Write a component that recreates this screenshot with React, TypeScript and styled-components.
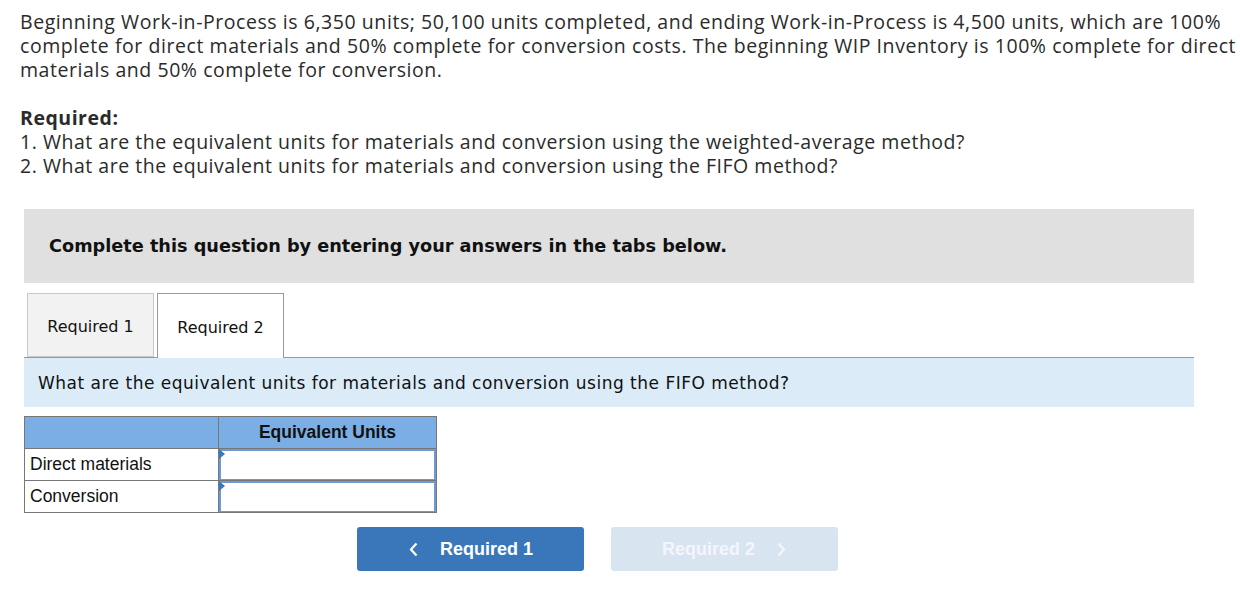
import React from 'react'
import styled, { createGlobalStyle } from 'styled-components'

const GlobalStyle = createGlobalStyle`
  body {
    margin: 0;
    background: white;
    color: #222;
  }
`

const Page = styled.div`
  padding: 10px 2px 0 20px;
  font-family: 'Open Sans', Lato, sans-serif;
`

const Intro = styled.p`
  margin: 0;
  font-size: 19.5px;
  line-height: 24px;
  letter-spacing: 0.56px;
  color: #2b2b2b;
`

const RequiredBlock = styled.div`
  margin-top: 24px;
  font-size: 19.5px;
  line-height: 24px;
  letter-spacing: 0.52px;
  color: #2b2b2b;

  strong {
    display: block;
    font-weight: 700;
  }
`

const Main = styled.div`
  margin: 31px 0 0 4px;
  width: 1170px;
`

const Instruction = styled.div`
  background: #e0e0e0;
  height: 74px;
  display: flex;
  align-items: center;
  padding-left: 25px;
  font-family: 'DejaVu Sans', Verdana, sans-serif;
  font-weight: 700;
  font-size: 17.7px;
  color: #111;
`

const Tabs = styled.div`
  display: flex;
  gap: 3px;
  margin-top: 10px;
  padding-left: 3px;
  border-bottom: 1px solid #999;
`

const Tab = styled.div<{ active?: boolean }>`
  width: 127px;
  height: ${(p) => (p.active ? '65px' : '64px')};
  margin-bottom: ${(p) => (p.active ? '-1px' : '0')};
  box-sizing: border-box;
  display: flex;
  align-items: center;
  justify-content: center;
  padding-top: 3px;
  font-family: 'DejaVu Sans', Verdana, sans-serif;
  font-size: 16px;
  color: #111;
  background: ${(p) => (p.active ? '#fff' : '#f2f2f2')};
  border: 1px solid ${(p) => (p.active ? '#999' : '#c8c8c8')};
  border-bottom: ${(p) => (p.active ? 'none' : '1px solid #c8c8c8')};
`

const Prompt = styled.div`
  background: #dbecf8;
  height: 49px;
  display: flex;
  align-items: center;
  padding-left: 14px;
  font-family: 'DejaVu Sans', Verdana, sans-serif;
  font-size: 17px;
  letter-spacing: 0.5px;
  color: #111;
`

const Table = styled.table`
  margin-top: 9px;
  border-collapse: collapse;
  font-family: 'Liberation Sans', Arial, sans-serif;
  font-size: 17.5px;
  color: #111;
`

const HeadCell = styled.th`
  background: #7aaee4;
  border: 1px solid #777;
  height: 31px;
  padding: 0;
  font-weight: 700;
  text-align: center;
`

const LabelCell = styled.td`
  width: 194px;
  height: 31px;
  border: 1px solid #777;
  padding: 0 0 0 5px;
  box-sizing: border-box;
`

const InputCell = styled.td`
  width: 217px;
  height: 31px;
  border: 1px solid #777;
  padding: 0;
  position: relative;
`

const Entry = styled.input`
  display: block;
  width: 100%;
  height: 31px;
  box-sizing: border-box;
  border: 2px solid #6b9ad6;
  border-width: 2px 2px 1px 2px;
  outline: none;
  background: white;
  margin: 0;
`

const Marker = styled.span`
  position: absolute;
  left: 0;
  top: 0;
  width: 0;
  height: 0;
  border-top: 5px solid transparent;
  border-bottom: 5px solid transparent;
  border-left: 6px solid #3a78bb;
`

const Nav = styled.div`
  display: flex;
  gap: 27px;
  margin: 14px 0 0 333px;
`

const NavButton = styled.button<{ disabled?: boolean }>`
  width: 227px;
  height: 44px;
  border: none;
  border-radius: 3px;
  background: ${(p) => (p.disabled ? '#d9e4f1' : '#3a77ba')};
  color: ${(p) => (p.disabled ? '#f3f6fb' : '#fff')};
  font-family: 'Liberation Sans', Arial, sans-serif;
  font-weight: 700;
  font-size: 18px;
  display: flex;
  align-items: center;
  justify-content: center;
  gap: 20px;
  padding: 0;

  svg {
    width: 12px;
    height: 15px;
  }
`

const Chevron = ({ dir }: { dir: 'left' | 'right' }) => (
  <svg viewBox="0 0 12 15" fill="none" stroke="currentColor" strokeWidth="2.2">
    {dir === 'left' ? <path d="M8.5 1.5 L3 7.5 L8.5 13.5" /> : <path d="M3.5 1.5 L9 7.5 L3.5 13.5" />}
  </svg>
)

const rows = ['Direct materials', 'Conversion']

export default function App() {
  return (
    <Page>
      <GlobalStyle />
      <Intro>
        Beginning Work-in-Process is 6,350 units; 50,100 units completed, and ending Work-in-Process is 4,500
        units, which are 100% complete for direct materials and 50% complete for conversion costs. The beginning
        WIP Inventory is 100% complete for direct materials and 50% complete for conversion.
      </Intro>
      <RequiredBlock>
        <strong>Required:</strong>
        1. What are the equivalent units for materials and conversion using the weighted-average method?
        <br />
        2. What are the equivalent units for materials and conversion using the FIFO method?
      </RequiredBlock>
      <Main>
        <Instruction>Complete this question by entering your answers in the tabs below.</Instruction>
        <Tabs>
          <Tab>Required 1</Tab>
          <Tab active>Required 2</Tab>
        </Tabs>
        <Prompt>What are the equivalent units for materials and conversion using the FIFO method?</Prompt>
        <Table>
          <thead>
            <tr>
              <HeadCell />
              <HeadCell>Equivalent Units</HeadCell>
            </tr>
          </thead>
          <tbody>
            {rows.map((r) => (
              <tr key={r}>
                <LabelCell>{r}</LabelCell>
                <InputCell>
                  <Entry aria-label={r} />
                  <Marker />
                </InputCell>
              </tr>
            ))}
          </tbody>
        </Table>
        <Nav>
          <NavButton>
            <Chevron dir="left" />
            Required 1
          </NavButton>
          <NavButton disabled>
            Required 2
            <Chevron dir="right" />
          </NavButton>
        </Nav>
      </Main>
    </Page>
  )
}
